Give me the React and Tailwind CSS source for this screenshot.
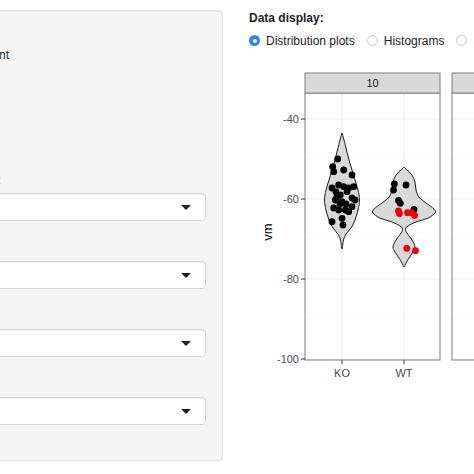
import React from 'react';

// catmull-rom -> cubic bezier through points
const smooth = (pts) => {
  let d = `M${pts[0][0]},${pts[0][1]}`;
  for (let i = 0; i < pts.length - 1; i++) {
    const p0 = pts[i - 1] || pts[i];
    const p1 = pts[i];
    const p2 = pts[i + 1];
    const p3 = pts[i + 2] || p2;
    const c1x = p1[0] + (p2[0] - p0[0]) / 6;
    const c1y = p1[1] + (p2[1] - p0[1]) / 6;
    const c2x = p2[0] - (p3[0] - p1[0]) / 6;
    const c2y = p2[1] - (p3[1] - p1[1]) / 6;
    d += ` C${c1x},${c1y} ${c2x},${c2y} ${p2[0]},${p2[1]}`;
  }
  return d;
};

const violin = (cx, rows) => {
  const right = rows.map(([y, w]) => [cx + w, y]);
  const left = rows.slice().reverse().map(([y, w]) => [cx - w, y]);
  return smooth([...right, ...left.slice(1)]) + ' Z';
};

const koShape = [
  [73, 0], [80, 2], [90, 4.5], [100, 7], [110, 10], [120, 13], [130, 16],
  [140, 17.5], [150, 16], [160, 13], [168, 9], [174, 4], [180, 1.5], [189, 0],
];

const wtShape = [
  [107, 0], [110, 3], [115, 8], [122, 11], [130, 12], [137, 15], [143, 22],
  [149, 30], [153, 31], [158, 24], [162, 12], [166, 4], [169, 1.5], [173, 3],
  [180, 8], [187, 11], [192, 9], [198, 5], [203, 2], [207, 0],
];

const koDots = [
  [100.7, 99], [95.7, 106.7], [96.7, 111.7], [106.7, 110], [115, 115], [95, 128],
  [101.7, 125], [106.7, 126.7], [111.7, 128], [116.7, 126.7], [100, 136.7],
  [103.3, 135], [110, 131.7], [98.3, 140], [105, 141.7], [115, 138], [118, 140],
  [96.7, 148], [101.7, 150], [108.3, 150], [111.7, 151.7], [115, 146.7],
  [95, 161.7], [105, 158.3], [106, 165], [103, 144], [99, 132], [109, 144],
];

const wtBlack = [
  [157.3, 124], [169, 125], [156.5, 130], [161.5, 140.5], [163.3, 143.3], [177, 149.5],
];

const wtRed = [
  [161.5, 151], [162.5, 153.5], [170.5, 152.7], [174.7, 152.7], [177.5, 155.5],
  [169.8, 188.3], [178.5, 190.7],
];

const majorY = [59, 139, 219, 299];
const minorY = [99, 179, 259];
const yLabels = [['-40', 59], ['-60', 139], ['-80', 219], ['-100', 299]];

const Plot = () => (
  <svg width="237" height="414" className="block mt-[11px]" fontFamily="'Liberation Sans', Arial, sans-serif">
    {/* panel 1 */}
    <rect x="68" y="33" width="135" height="267" fill="#ffffff" />
    {minorY.map((y) => (
      <line key={'m' + y} x1="68" x2="203" y1={y} y2={y} stroke="#f3f3f3" strokeWidth="0.6" />
    ))}
    {majorY.map((y) => (
      <line key={'M' + y} x1="68" x2="203" y1={y} y2={y} stroke="#ebebeb" strokeWidth="1" />
    ))}
    <line x1="105" x2="105" y1="33" y2="300" stroke="#ebebeb" />
    <line x1="167" x2="167" y1="33" y2="300" stroke="#ebebeb" />

    <path d={violin(105, koShape)} fill="#d9d9d9" stroke="#1a1a1a" strokeWidth="1" />
    <path d={violin(167, wtShape)} fill="#d9d9d9" stroke="#1a1a1a" strokeWidth="1" />
    {koDots.map(([x, y], i) => <circle key={'k' + i} cx={x} cy={y} r="3.4" fill="#000" />)}
    {wtBlack.map(([x, y], i) => <circle key={'b' + i} cx={x} cy={y} r="3.4" fill="#000" />)}
    {wtRed.map(([x, y], i) => <circle key={'r' + i} cx={x} cy={y} r="3.4" fill="#f00000" />)}

    <rect x="68" y="33" width="135" height="267" fill="none" stroke="#7f7f7f" strokeWidth="1" />
    <rect x="68" y="13" width="135" height="20" fill="#d9d9d9" stroke="#7f7f7f" strokeWidth="1" />
    <text x="135.5" y="27" textAnchor="middle" fontSize="11" fill="#1a1a1a">10</text>

    {/* panel 2, cut off */}
    <rect x="215" y="33" width="40" height="267" fill="#ffffff" />
    {minorY.map((y) => (
      <line key={'m2' + y} x1="215" x2="240" y1={y} y2={y} stroke="#f3f3f3" strokeWidth="0.6" />
    ))}
    {majorY.map((y) => (
      <line key={'M2' + y} x1="215" x2="240" y1={y} y2={y} stroke="#ebebeb" strokeWidth="1" />
    ))}
    <rect x="215" y="33" width="40" height="267" fill="none" stroke="#7f7f7f" strokeWidth="1" />
    <rect x="215" y="13" width="40" height="20" fill="#d9d9d9" stroke="#7f7f7f" strokeWidth="1" />

    {/* axes */}
    {yLabels.map(([t, y]) => (
      <g key={t}>
        <line x1="64" x2="68" y1={y} y2={y} stroke="#333" strokeWidth="1" />
        <text x="62" y={y + 4} textAnchor="end" fontSize="11" fill="#4d4d4d">{t}</text>
      </g>
    ))}
    <line x1="105" x2="105" y1="300" y2="304" stroke="#333" />
    <line x1="167" x2="167" y1="300" y2="304" stroke="#333" />
    <text x="105" y="317" textAnchor="middle" fontSize="11" fill="#4d4d4d">KO</text>
    <text x="167" y="317" textAnchor="middle" fontSize="11" fill="#4d4d4d">WT</text>
    <text x="0" y="0" transform="translate(35,172) rotate(-90)" textAnchor="middle" fontSize="13" fill="#000">vm</text>
  </svg>
);

const Select = ({ value }) => (
  <div className="h-[28px] bg-white border border-[#d4d4d4] rounded-[4px] flex items-center justify-between pl-[12px] pr-[14px] shadow-[inset_0_1px_1px_rgba(0,0,0,0.05)]">
    <span className="text-[12px] text-[#333]">{value}</span>
    <span className="w-0 h-0 border-x-[5px] border-x-transparent border-t-[5px] border-t-[#222]" />
  </div>
);

const Field = ({ label, value }) => (
  <div className="mb-[19px]">
    <label className="block text-[12px] leading-[17px] font-bold text-[#333] mb-[4px]">{label}</label>
    <Select value={value} />
  </div>
);

const Radio = ({ label, checked }) => (
  <label className="flex items-center gap-[6px]">
    {checked ? (
      <span className="w-[11px] h-[11px] rounded-full bg-[#2d86ef] flex items-center justify-center">
        <span className="w-[4px] h-[4px] rounded-full bg-white" />
      </span>
    ) : (
      <span className="w-[11px] h-[11px] rounded-full bg-white border border-[#c8c8c8]" />
    )}
    <span>{label}</span>
  </label>
);

export default function App() {
  return (
    <div className="w-[474px] h-[474px] overflow-hidden bg-white flex font-['Liberation_Sans',Arial,sans-serif] text-[#333]">
      {/* sidebar, partly scrolled out */}
      <div className="w-[223px] shrink-0 pt-[10px]">
        <div className="ml-[-137px] w-[360px] h-[451px] bg-[#f5f5f5] border border-[#e3e3e3] rounded-[4px] shadow-[inset_0_1px_1px_rgba(0,0,0,0.05)] p-[19px] pr-[16px]">
          <div className="text-[12px] leading-[17px] font-bold">Options:</div>
          <label className="flex items-center gap-[5px] text-[12px] leading-[17px]">
            <span className="w-[13px] h-[13px] bg-white border border-[#999] rounded-[2px]" />
            <span>Baseline adjustment</span>
          </label>
          <div className="mt-[108px]">
            <Field label="Parameter on y-axis:" value="vm" />
            <Field label="Group by:" value="genotype" />
            <Field label="Facet by:" value="day" />
            <Field label="Color by:" value="treatment" />
          </div>
        </div>
      </div>

      {/* main */}
      <div className="ml-[14px] flex-1">
        <div className="pl-[12px] pt-[10px]">
          <div className="h-[17px] leading-[17px] text-[12px] font-bold text-[#222]">Data display:</div>
          <div className="h-[17px] mt-[5px] flex items-center gap-[12px] text-[12px] text-[#222] whitespace-nowrap">
            <Radio label="Distribution plots" checked />
            <Radio label="Histograms" />
            <Radio label="Summary" />
          </div>
        </div>
        <Plot />
      </div>
    </div>
  );
}
